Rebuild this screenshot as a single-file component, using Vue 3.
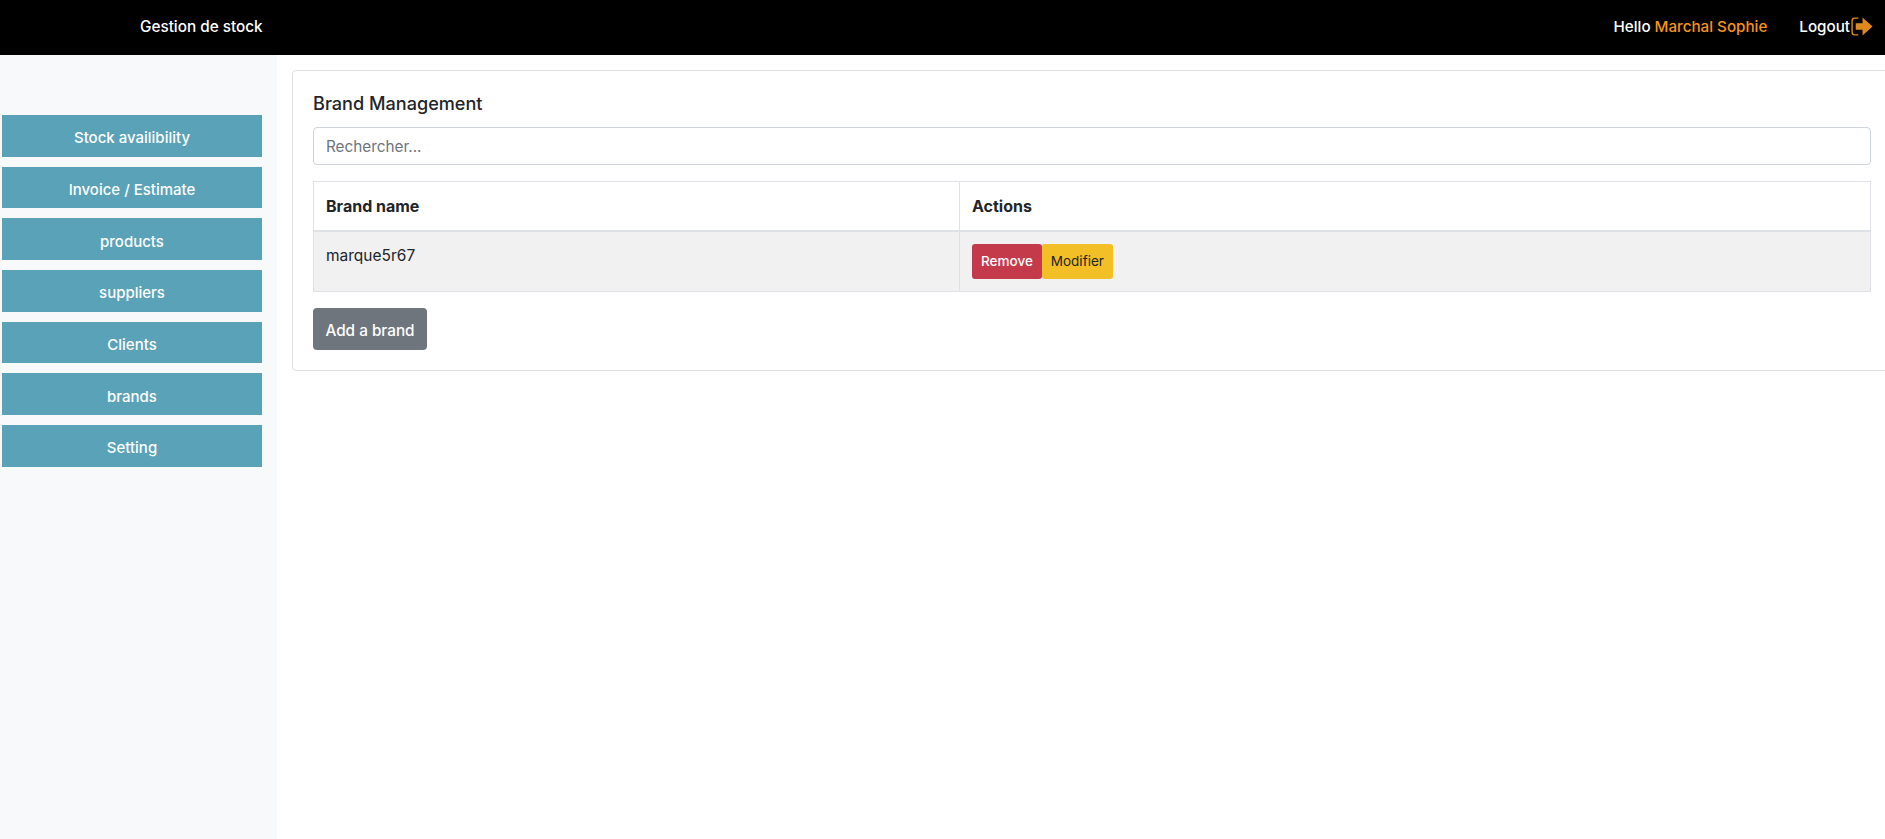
<script setup>
const menu = ['Stock availibility', 'Invoice / Estimate', 'products', 'suppliers', 'Clients', 'brands', 'Setting']
</script>

<template>
  <div class="page">
    <header class="topbar">
      <div class="brand">Gestion de stock</div>
      <div class="user">
        <span class="hello">Hello <span class="name">Marchal Sophie</span></span>
        <a class="logout">Logout<svg class="logout-icon" viewBox="0 0 22 22" width="23" height="23" aria-hidden="true">
          <path d="M8 3H4.5A2.5 2.5 0 0 0 2 5.500V16.500A2.500 2.500 0 0 0 4.500 19H8" fill="none" stroke="currentColor" stroke-width="1.300" />
          <path d="M5.500 8H12V2.500L21.500 11L12 19.500V14H5.500Z" fill="currentColor" />
        </svg></a>
      </div>
    </header>
    <div class="body">
      <aside class="sidebar">
        <a v-for="item in menu" :key="item" class="menu-item">{{ item }}</a>
      </aside>
      <main class="main">
        <section class="card">
          <h5 class="title">Brand Management</h5>
          <input class="search" type="text" placeholder="Rechercher..." />
          <table class="table">
            <thead>
              <tr>
                <th class="col-name">Brand name</th>
                <th>Actions</th>
              </tr>
            </thead>
            <tbody>
              <tr>
                <td>marque5r67</td>
                <td>
                  <div class="actions">
                    <button class="btn-sm danger">Remove</button>
                    <button class="btn-sm warning">Modifier</button>
                  </div>
                </td>
              </tr>
            </tbody>
          </table>
          <button class="add">Add a brand</button>
        </section>
      </main>
    </div>
  </div>
</template>

<style>
html, body { margin: 0; padding: 0; overflow: hidden; }
</style>

<style scoped>
.page {
  height: 839px;
  display: flex;
  flex-direction: column;
  font-family: Inter, "Liberation Sans", sans-serif;
  font-size: 15.3px;
  color: #212529;
  overflow: hidden;
}
.topbar {
  height: 55px;
  flex: none;
  background: #000;
  color: #fff;
  display: flex;
  align-items: center;
  justify-content: space-between;
  padding: 0 12px 2px 140px;
  box-sizing: border-box;
}
.brand { font-weight: 500; font-size: 15.3px; }
.user { display: flex; align-items: center; gap: 32px; font-weight: 500; font-size: 15.2px; }
.name { color: #f7941d; }
.logout { display: flex; align-items: center; }
.logout-icon { color: #e08a1e; }
.body { flex: 1; display: flex; min-height: 0; }
.sidebar {
  width: 277px;
  flex: none;
  background: #f8f9fa;
  box-sizing: border-box;
  padding: 60px 15px 0 2px;
  display: flex;
  flex-direction: column;
  gap: 10px;
}
.menu-item {
  height: 41.67px;
  background: #59a2b8;
  color: #fff;
  font-weight: 500;
  font-size: 15px;
  display: flex;
  align-items: center;
  justify-content: center;
  padding-top: 4px;
  box-sizing: border-box;
}
.main {
  flex: 1;
  min-width: 0;
  padding: 15px 0 0 15px;
  overflow: hidden;
}
.card {
  width: 1600px;
  box-sizing: border-box;
  border: 1px solid #dfdfdf;
  border-radius: 4px;
  padding: 21px 20px 20px;
  height: 301px;
}
.title {
  margin: 0 0 13px;
  font-size: 18.1px;
  font-weight: 500;
  line-height: 22px;
  color: #212529;
}
.search {
  display: block;
  width: 1558px;
  height: 38px;
  box-sizing: border-box;
  border: 1px solid #ced4da;
  border-radius: 4px;
  padding: 0 12px;
  font: inherit;
  outline: none;
}
.search::placeholder { color: #6c757d; opacity: 1; }
.table {
  width: 1558px;
  margin-top: 16px;
  border-collapse: collapse;
  table-layout: fixed;
}
.col-name { width: 646px; }
th, td {
  border: 1px solid #dee2e6;
  padding: 12px;
  text-align: left;
  vertical-align: top;
  line-height: 24px;
}
th { font-weight: 700; font-size: 16px; border-bottom-width: 2px; height: 49px; box-sizing: border-box; }
tbody tr { background: #f1f1f1; height: 60px; }
td { font-weight: 400; font-size: 15.5px; }
.actions { display: flex; }
.btn-sm {
  height: 35px;
  border: none;
  border-radius: 3px;
  font: inherit;
  font-size: 13.500px;
  padding: 0 9px;
  line-height: 35px;
}
.danger { background: #c53a4b; color: #fff; font-weight: 500; }
.warning { background: #f2bf27; color: #212529; }
.add {
  display: block;
  margin-top: 16px;
  height: 42px;
  width: 114px;
  background: #6f757d;
  color: #fff;
  border: none;
  border-radius: 4px;
  font: inherit;
  font-weight: 500;
  padding: 2px 0 0;
}
</style>
